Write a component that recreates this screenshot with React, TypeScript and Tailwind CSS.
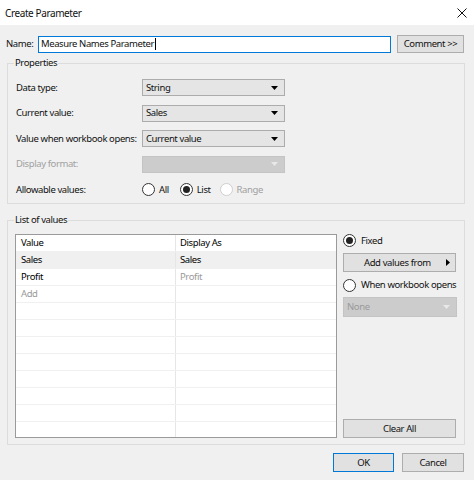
import React from "react";

const Arrow = ({ color = "#000" }: { color?: string }) => (
  <svg width="7" height="4" viewBox="0 0 7 4">
    <path d="M0 0h7L3.5 4z" fill={color} />
  </svg>
);

const Select = ({
  value,
  disabled,
  w,
  h,
}: {
  value?: string;
  disabled?: boolean;
  w: string;
  h: string;
}) => (
  <div
    className={
      disabled
        ? `flex items-center justify-between ${w} ${h} border border-[#c4c4c4] bg-[#cccccc] pl-[3px] pr-[6px] text-[#9a9a9a]`
        : `flex items-center justify-between ${w} ${h} border border-[#acacac] bg-[#e5e5e5] pl-[3px] pr-[6px]`
    }
  >
    <span>{value}</span>
    <Arrow color={disabled ? "#e8e8e8" : "#000"} />
  </div>
);

const Radio = ({ checked, disabled }: { checked?: boolean; disabled?: boolean }) => (
  <span
    className={
      disabled
        ? "flex h-[13px] w-[13px] shrink-0 items-center justify-center rounded-full border border-[#cfcfcf] bg-white"
        : "flex h-[13px] w-[13px] shrink-0 items-center justify-center rounded-full border border-[#333333] bg-white"
    }
  >
    {checked && <span className="h-[7px] w-[7px] rounded-full bg-[#222222]" />}
  </span>
);

const rows = [
  { v: "Value", d: "Display As", bg: "", vc: "text-black", dc: "text-black" },
  { v: "Sales", d: "Sales", bg: "bg-[#f0f0f0]", vc: "text-black", dc: "text-black" },
  { v: "Profit", d: "Profit", bg: "", vc: "text-black", dc: "text-[#9a9a9a]" },
  { v: "Add", d: "", bg: "", vc: "text-[#9a9a9a]", dc: "" },
  { v: "", d: "", bg: "", vc: "", dc: "" },
  { v: "", d: "", bg: "", vc: "", dc: "" },
  { v: "", d: "", bg: "", vc: "", dc: "" },
  { v: "", d: "", bg: "", vc: "", dc: "" },
  { v: "", d: "", bg: "", vc: "", dc: "" },
  { v: "", d: "", bg: "", vc: "", dc: "" },
  { v: "", d: "", bg: "", vc: "", dc: "" },
  { v: "", d: "", bg: "", vc: "", dc: "" },
];

export default function App() {
  return (
    <div className="flex h-[480px] w-[474px] flex-col overflow-hidden whitespace-nowrap bg-[#f0f0f0] font-['Noto_Sans',sans-serif] text-[9.5px] leading-none tracking-[-0.4px] text-[#111]">
      {/* Title bar */}
      <div className="flex h-[25px] items-center justify-between bg-white pl-[5px] pr-[7px]">
        <span className="text-[10px]">Create Parameter</span>
        <svg width="10" height="10" viewBox="0 0 10 10">
          <path d="M0.5 0.5L9.5 9.5M9.5 0.5L0.5 9.5" stroke="#111" strokeWidth="1" />
        </svg>
      </div>

      <div className="flex flex-col px-[7px] pt-[10px]">
        {/* Name row */}
        <div className="flex h-[18px] items-center">
          <span className="-ml-[1px] w-[31px]">Name:</span>
          <div className="ml-[1px] flex h-[17px] w-[353px] items-center border border-[#0078d7] bg-white pl-[2px]">
            <span>Measure Names Parameter</span>
            <span className="ml-[1px] h-[12px] w-[1px] bg-black" />
          </div>
          <div className="ml-[6px] flex h-[18px] w-[67px] items-center justify-center border border-[#adadad] bg-[#e1e1e1]">
            Comment &gt;&gt;
          </div>
        </div>

        {/* Properties */}
        <fieldset className="mt-[2px] w-[458px] border border-[#dcdcdc] px-[6px] pb-[5px]">
          <legend className="px-[1px] leading-[16px]">Properties</legend>
          <div className="flex flex-col gap-[8.5px] pl-[2px] pt-[8px]">
            <div className="flex h-[17px] items-center">
              <span className="w-[126px]">Data type:</span>
              <Select value="String" w="w-[143px]" h="h-[17px]" />
            </div>
            <div className="flex h-[17px] items-center">
              <span className="w-[126px]">Current value:</span>
              <Select value="Sales" w="w-[143px]" h="h-[17px]" />
            </div>
            <div className="flex h-[17px] items-center">
              <span className="w-[126px]">Value when workbook opens:</span>
              <Select value="Current value" w="w-[143px]" h="h-[17px]" />
            </div>
            <div className="flex h-[17px] items-center">
              <span className="w-[126px] text-[#a0a0a0]">Display format:</span>
              <Select disabled w="w-[143px]" h="h-[17px]" />
            </div>
            <div className="flex h-[17px] items-center">
              <span className="w-[126px]">Allowable values:</span>
              <div className="flex items-center">
                <Radio />
                <span className="ml-[4px]">All</span>
                <span className="ml-[11px]">
                  <Radio checked />
                </span>
                <span className="ml-[4px]">List</span>
                <span className="ml-[9px]">
                  <Radio disabled />
                </span>
                <span className="ml-[4px] text-[#a0a0a0]">Range</span>
              </div>
            </div>
          </div>
        </fieldset>

        {/* List of values */}
        <fieldset className="mt-[8px] w-[458px] border border-[#dcdcdc] px-[7px] pb-[6px]">
          <legend className="-ml-[1px] px-[1px] leading-[16px]">List of values</legend>
          <div className="flex pt-[6px]">
            <div className="flex h-[204px] w-[322px] flex-col overflow-hidden border border-[#9a9a9a] bg-white">
              {rows.map((r, i) => (
                <div key={i} className={`flex h-[17px] shrink-0 border-b border-[#f0f0f0] ${r.bg}`}>
                  <div className={`flex w-[160px] items-center border-r border-[#e6e6e6] pl-[5px] ${r.vc}`}>
                    {r.v}
                  </div>
                  <div className={`flex flex-1 items-center pl-[4px] ${r.dc}`}>{r.d}</div>
                </div>
              ))}
            </div>
            <div className="ml-[6px] flex h-[204px] w-[113px] flex-col">
              <div className="flex h-[13px] items-center">
                <Radio checked />
                <span className="ml-[5px]">Fixed</span>
              </div>
              <div className="mt-[6px] flex h-[19px] items-center justify-between border border-[#adadad] bg-[#e1e1e1] pl-[20px] pr-[5px]">
                <span>Add values from</span>
                <svg width="4" height="7" viewBox="0 0 4 7">
                  <path d="M0 0v7l4-3.5z" fill="#000" />
                </svg>
              </div>
              <div className="mt-[6px] flex h-[14px] items-center">
                <Radio />
                <span className="ml-[5px]">When workbook opens</span>
              </div>
              <div className="mt-[5px]">
                <Select disabled value="None" w="w-[114px]" h="h-[20px]" />
              </div>
              <div className="mt-auto flex h-[19px] items-center justify-center border border-[#adadad] bg-[#e1e1e1]">
                Clear All
              </div>
            </div>
          </div>
        </fieldset>

        {/* Bottom buttons */}
        <div className="mt-[8px] flex justify-end gap-[8px] pr-[3px]">
          <div className="flex h-[19px] w-[61px] items-center justify-center border border-[#0078d7] bg-[#e1e1e1]">
            OK
          </div>
          <div className="flex h-[19px] w-[62px] items-center justify-center border border-[#adadad] bg-[#e1e1e1]">
            Cancel
          </div>
        </div>
      </div>
    </div>
  );
}
